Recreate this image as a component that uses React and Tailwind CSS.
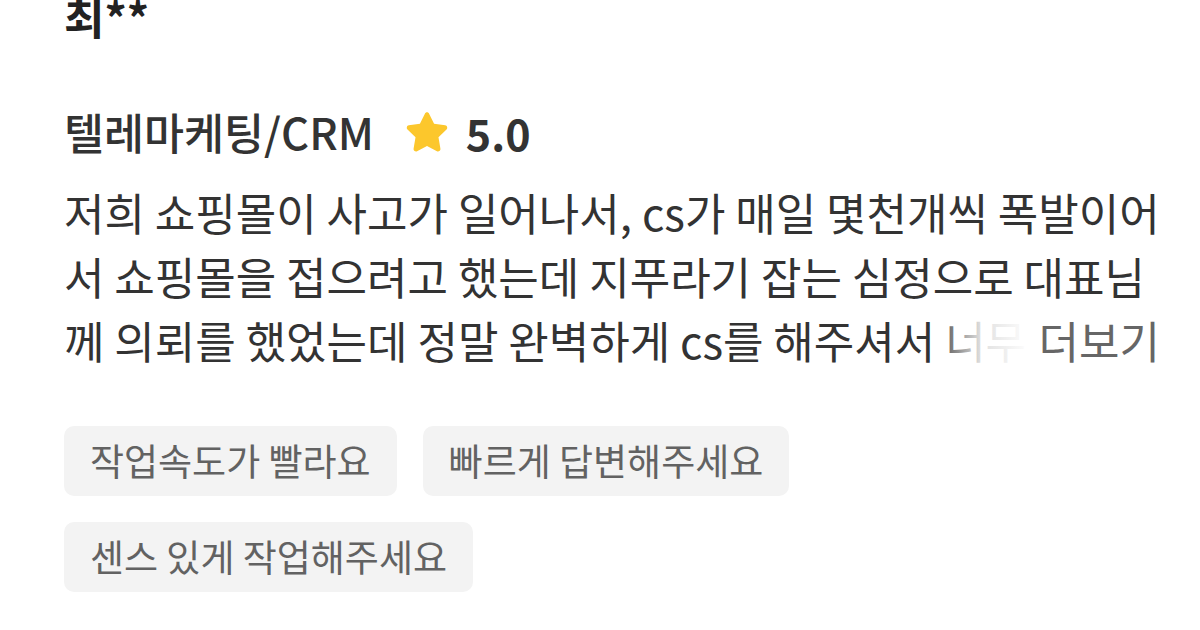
export default function App() {
  const font = { fontFamily: '"Noto Sans CJK KR", "Noto Sans", sans-serif' };

  return (
    <div className="w-[1200px] h-[630px] overflow-hidden bg-white" style={font}>
      <div className="pl-[64px] pr-[40px]">
        {/* reviewer name, cut off at the top */}
        <div className="-mt-[12px] text-[44px] leading-[56px] font-bold text-[#222]">최**</div>

        {/* category + rating */}
        <div className="mt-[60px] flex items-center h-[56px]">
          <span className="text-[43.5px] font-medium text-[#333]">텔레마케팅/CRM</span>
          <span className="ml-[30px] flex">
            <svg width="46" height="44" viewBox="0 0 24 23">
              <path
                d="M12 1.2c.5 0 .9.3 1.1.7l2.6 5.3 5.8.8c.5.1.9.4 1 .9.2.5 0 1-.3 1.3l-4.2 4.1 1 5.8c.1.5-.1 1-.5 1.3-.4.3-.9.3-1.3.1L12 18.8l-5.2 2.7c-.4.2-.9.2-1.3-.1-.4-.3-.6-.8-.5-1.3l1-5.8-4.2-4.1c-.3-.3-.5-.8-.3-1.3.1-.5.5-.8 1-.9l5.8-.8 2.6-5.3c.2-.4.6-.7 1.1-.7z"
                fill="#fcc72c"
              />
            </svg>
          </span>
          <span className="ml-[16px] text-[43px] font-bold text-[#333]">5.0</span>
        </div>

        {/* review body */}
        <div className="relative mt-[20px] text-[44px] leading-[64px] text-[#333] overflow-hidden h-[192px]">
          <div className="whitespace-nowrap">저희 쇼핑몰이 사고가 일어나서, cs가 매일 몇천개씩 폭발이어</div>
          <div className="whitespace-nowrap">서 쇼핑몰을 접으려고 했는데 지푸라기 잡는 심정으로 대표님</div>
          <div className="whitespace-nowrap">께 의뢰를 했었는데 정말 완벽하게 cs를 해주셔서 너무 고마웠습니다</div>
          <div className="absolute right-0 bottom-0 flex h-[64px]">
            <div className="w-[100px] bg-gradient-to-r from-white/0 via-white/85 to-white" />
            <div className="bg-white pl-[8px] text-[#666]">더보기</div>
          </div>
        </div>

        {/* keyword tags */}
        <div className="mt-[54px] flex flex-wrap gap-[26px] w-[800px]">
          {["작업속도가 빨라요", "빠르게 답변해주세요", "센스 있게 작업해주세요"].map((t) => (
            <div
              key={t}
              className="h-[70px] px-[26px] flex items-center rounded-[10px] bg-[#f3f3f3] text-[37px] text-[#626262]"
            >
              {t}
            </div>
          ))}
        </div>
      </div>
    </div>
  );
}
